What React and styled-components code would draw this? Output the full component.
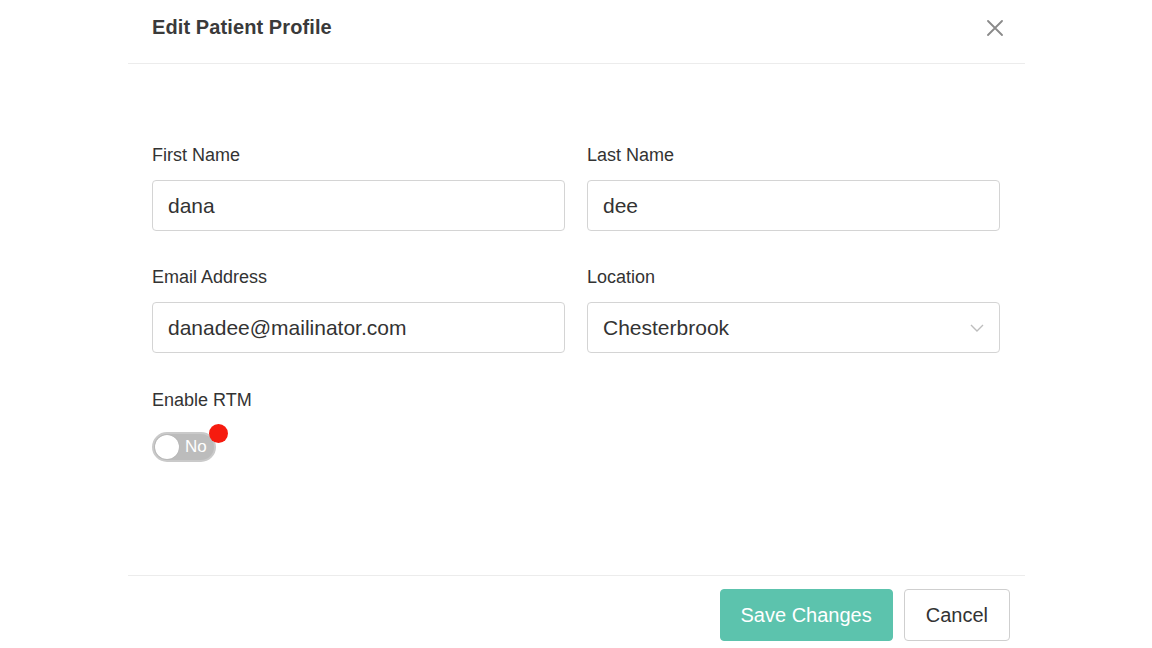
import React, { useState } from "react"
import styled, { createGlobalStyle } from "styled-components"

const GlobalStyle = createGlobalStyle`
  html, body {
    margin: 0;
    padding: 0;
    background: #ffffff;
    font-family: "Liberation Sans", Arial, sans-serif;
    color: #333333;
  }
  * {
    box-sizing: border-box;
  }
`

const Page = styled.div`
  width: 1152px;
  height: 648px;
  overflow: hidden;
  display: flex;
  justify-content: center;
`

const Modal = styled.div`
  width: 897px;
  margin-left: 1px;
  display: flex;
  flex-direction: column;
`

const Header = styled.div`
  height: 64px;
  border-bottom: 1px solid #ececec;
  display: flex;
  align-items: center;
  justify-content: space-between;
  padding: 0 20px 8px 24px;
`

const Title = styled.h2`
  margin: 0;
  font-size: 20px;
  font-weight: 700;
  color: #3a3a3a;
  letter-spacing: 0.1px;
`

const CloseButton = styled.button`
  border: none;
  background: none;
  padding: 0;
  width: 20px;
  height: 20px;
  display: flex;
  align-items: center;
  justify-content: center;
  cursor: pointer;
`

const Body = styled.div`
  height: 511px;
  padding: 81px 26px 0 24px;
`

const FieldGrid = styled.div`
  display: grid;
  grid-template-columns: 413px 413px;
  column-gap: 22px;
  row-gap: 36px;
`

const Field = styled.div`
  display: flex;
  flex-direction: column;
`

const Label = styled.label`
  font-size: 18px;
  color: #333333;
  line-height: 20px;
  margin-bottom: ${props => (props.spaced ? "22px" : "15px")};
`

const Input = styled.input`
  height: 51px;
  width: 100%;
  border: 1px solid #d4d4d4;
  border-radius: 4px;
  padding: 0 15px;
  font-family: "Liberation Sans", Arial, sans-serif;
  font-size: 21px;
  color: #333333;
  background: #ffffff;
  outline: none;
`

const SelectBox = styled.div`
  height: 51px;
  width: 100%;
  border: 1px solid #d4d4d4;
  border-radius: 4px;
  padding: 0 15px;
  display: flex;
  align-items: center;
  justify-content: space-between;
  font-size: 21px;
  color: #333333;
`

const ToggleField = styled(Field)`
  margin-top: 37px;
`

const ToggleWrap = styled.div`
  position: relative;
  width: 64px;
  height: 30px;
`

const Track = styled.button`
  width: 64px;
  height: 30px;
  border-radius: 15px;
  border: 2px solid #cacaca;
  background: ${props => (props.on ? "#5cc3ad" : "#bcbcbc")};
  padding: 0 0 0 1px;
  display: flex;
  align-items: center;
  cursor: pointer;
  font-family: "Liberation Sans", Arial, sans-serif;
`

const Knob = styled.span`
  width: 24px;
  height: 24px;
  border-radius: 50%;
  background: #ffffff;
  box-shadow: 0 0 1px rgba(0, 0, 0, 0.2);
`

const ToggleText = styled.span`
  margin-left: 6px;
  font-size: 17px;
  color: #ffffff;
`

const Badge = styled.span`
  position: absolute;
  top: -8px;
  right: -12px;
  width: 19px;
  height: 19px;
  border-radius: 50%;
  background: #f61b0f;
`

const Footer = styled.div`
  border-top: 1px solid #ececec;
  display: flex;
  justify-content: flex-end;
  gap: 11px;
  padding: 13px 15px 0 0;
`

const Button = styled.button`
  height: 52px;
  border-radius: 4px;
  font-family: "Liberation Sans", Arial, sans-serif;
  font-size: 20px;
  padding: 0 ${props => (props.primary ? "20px" : "21px")};
  cursor: pointer;
  border: 1px solid ${props => (props.primary ? "#5cc3ad" : "#cfcfcf")};
  background: ${props => (props.primary ? "#5cc3ad" : "#ffffff")};
  color: ${props => (props.primary ? "#ffffff" : "#333333")};
`

const App = () => {
  const [rtm, setRtm] = useState(false)

  return (
    <Page>
      <GlobalStyle />
      <Modal>
        <Header>
          <Title>Edit Patient Profile</Title>
          <CloseButton aria-label="Close">
            <svg width="16" height="16" viewBox="0 0 16 16">
              <path
                d="M1 1 L15 15 M15 1 L1 15"
                stroke="#8a8a8a"
                strokeWidth="1.8"
                strokeLinecap="round"
              />
            </svg>
          </CloseButton>
        </Header>
        <Body>
          <FieldGrid>
            <Field>
              <Label>First Name</Label>
              <Input defaultValue="dana" />
            </Field>
            <Field>
              <Label>Last Name</Label>
              <Input defaultValue="dee" />
            </Field>
            <Field>
              <Label>Email Address</Label>
              <Input defaultValue="danadee@mailinator.com" />
            </Field>
            <Field>
              <Label>Location</Label>
              <SelectBox>
                <span>Chesterbrook</span>
                <svg width="14" height="8" viewBox="0 0 14 8">
                  <path
                    d="M1 1 L7 7 L13 1"
                    fill="none"
                    stroke="#bdbdbd"
                    strokeWidth="1.4"
                  />
                </svg>
              </SelectBox>
            </Field>
          </FieldGrid>
          <ToggleField>
            <Label spaced>Enable RTM</Label>
            <ToggleWrap>
              <Track on={rtm ? 1 : 0} onClick={() => setRtm(!rtm)}>
                <Knob />
                <ToggleText>{rtm ? "Yes" : "No"}</ToggleText>
              </Track>
              <Badge />
            </ToggleWrap>
          </ToggleField>
        </Body>
        <Footer>
          <Button primary>Save Changes</Button>
          <Button>Cancel</Button>
        </Footer>
      </Modal>
    </Page>
  )
}

export default App
